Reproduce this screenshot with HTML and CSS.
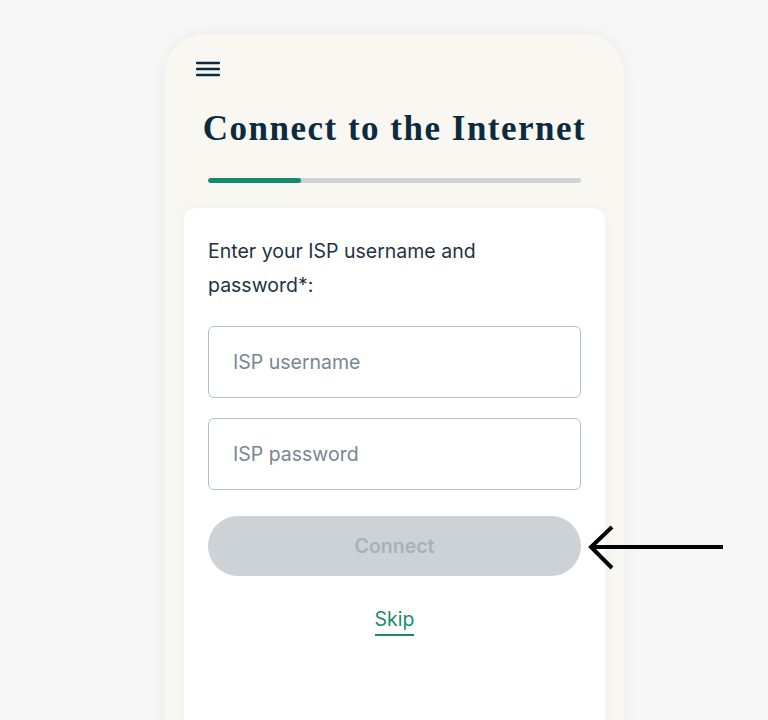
FILE: index.html
```html
<!DOCTYPE html>
<html lang="en">
<head>
<meta charset="utf-8">
<title>Connect to the Internet</title>
<link rel="stylesheet" href="styles.css">
</head>
<body>
<div class="stage">
  <div class="phone">
    <button class="menu" aria-label="Menu">
      <svg width="24" height="18" viewBox="0 0 24 18"><path d="M1 3h22M1 9h22M1 15h22" stroke="#0d2b3e" stroke-width="2.4" stroke-linecap="round"/></svg>
    </button>
    <h1 class="title">Connect to the Internet</h1>
    <div class="progress"><div class="progress-fill" style="width:25%"></div></div>
    <div class="card">
      <p class="prompt">Enter your ISP username and password*:</p>
      <div class="field">ISP username</div>
      <div class="field">ISP password</div>
      <div class="btn">Connect</div>
      <div class="skip-row"><a class="skip">Skip</a></div>
    </div>
  </div>
  <svg class="arrow" width="140" height="50" viewBox="0 0 140 50"><path d="M4 24H136M25 4L4 24L25 45" fill="none" stroke="#000" stroke-width="4"/></svg>
</div>
</body>
</html>
```
FILE: styles.css
```css
* { box-sizing: border-box; }
html, body { margin: 0; height: 100%; overflow: hidden; }
body {
  background: #f7f7f7;
  font-family: Inter, "Noto Sans", sans-serif;
}
.stage {
  position: relative;
  padding-top: 34px;
  padding-left: 165px;
}
.phone {
  width: 459px;
  height: 760px;
  background: #f8f7f2;
  border-radius: 40px;
  box-shadow: 0 0 18px rgba(0,0,0,0.06);
  padding: 26px 19px 0;
  display: flex;
  flex-direction: column;
}
.menu {
  align-self: flex-start;
  margin-left: 12px;
  padding: 0;
  border: 0;
  background: none;
  height: 18px;
  display: block;
}
.menu svg { display: block; }
.title {
  margin: 29px 0 0;
  text-align: center;
  font-family: "Liberation Serif", "DejaVu Serif", serif;
  font-weight: 700;
  font-size: 35px;
  line-height: 44px;
  color: #0d2b3e;
  letter-spacing: 1.5px;
}
.progress {
  margin: 27px 24px 0;
  height: 5px;
  background: #cfd4d9;
  border-radius: 3px;
  overflow: hidden;
}
.progress-fill {
  height: 100%;
  background: #168a6a;
  border-radius: 3px;
}
.card {
  margin-top: 25px;
  background: #fff;
  border-radius: 12px;
  box-shadow: 0 0 14px rgba(0,0,0,0.04);
  padding: 26px 24px 0;
  flex: 1;
}
.prompt {
  margin: 0;
  font-size: 19.5px;
  line-height: 34px;
  color: #1d3344;
  padding-right: 80px;
}
.field {
  margin-top: 24px;
  height: 72px;
  border: 1px solid #b6bec5;
  border-radius: 6px;
  padding: 0 24px;
  display: flex;
  align-items: center;
  font-size: 19.5px;
  color: #79868f;
}
.field + .field { margin-top: 20px; }
.btn {
  margin-top: 26px;
  height: 60px;
  border-radius: 30px;
  background: #cdd2d6;
  display: flex;
  align-items: center;
  justify-content: center;
  font-size: 19.5px;
  font-weight: 600;
  color: #a9b1b8;
}
.skip-row {
  margin-top: 30px;
  text-align: center;
}
.skip {
  display: inline-block;
  font-size: 19.5px;
  line-height: 26px;
  color: #1b8b6b;
  border-bottom: 2.5px solid #1b8b6b;
  padding-bottom: 2px;
}
.arrow {
  position: absolute;
  left: 587px;
  top: 523px;
}
```
